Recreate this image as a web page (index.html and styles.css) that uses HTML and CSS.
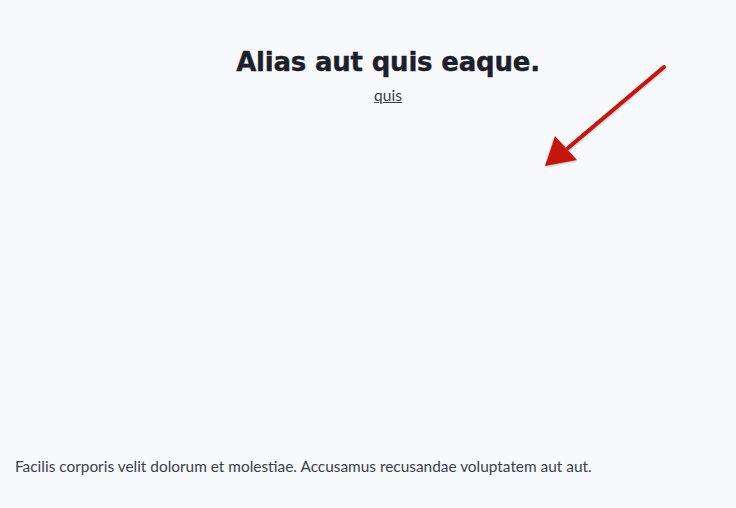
FILE: index.html
```html
<!DOCTYPE html>
<html>
<head>
<meta charset="utf-8">
<link rel="stylesheet" href="styles.css">
</head>
<body>
<div class="page">
  <header class="hero">
    <h1 class="title">Alias aut quis eaque.</h1>
    <a class="link" href="#">quis</a>
  </header>
  <div class="canvas">
    <svg class="arrow" width="140" height="120" viewBox="0 0 140 120">
      <defs>
        <filter id="sh" x="-20%" y="-20%" width="140%" height="140%">
          <feDropShadow dx="0" dy="1" stdDeviation="1" flood-color="#000" flood-opacity="0.25"/>
        </filter>
      </defs>
      <g filter="url(#sh)">
        <line x1="124" y1="7" x2="28" y2="88" stroke="#c4180c" stroke-width="4" stroke-linecap="round"/>
        <polygon points="5,106 15,76 37,100" fill="#c4180c"/>
      </g>
    </svg>
  </div>
  <p class="note">Facilis corporis velit dolorum et molestiae. Accusamus recusandae voluptatem aut aut.</p>
</div>
</body>
</html>
```
FILE: styles.css
```css
html, body {
  margin: 0;
  padding: 0;
  background: #f8f9fc;
}
.page {
  width: 736px;
  height: 508px;
  display: flex;
  flex-direction: column;
  position: relative;
  font-family: Lato, "Open Sans", sans-serif;
}
.hero {
  display: flex;
  flex-direction: column;
  align-items: center;
  padding: 44px 0 0 40px;
}
.title {
  margin: 0;
  font-family: "DejaVu Sans", sans-serif;
  font-weight: 700;
  font-size: 26px;
  line-height: 36px;
  color: #1d1f2b;
  letter-spacing: -0.2px;
  -webkit-text-stroke: 0.4px #1d1f2b;
}
.link {
  margin-top: 6px;
  font-size: 15.5px;
  line-height: 18px;
  color: #3b3d48;
  text-decoration: underline;
}
.canvas {
  flex: 1;
}
.arrow {
  position: absolute;
  left: 540px;
  top: 60px;
}
.note {
  margin: 0 0 32px 15px;
  font-size: 15.4px;
  line-height: 20px;
  color: #3c3e4a;
}
```
